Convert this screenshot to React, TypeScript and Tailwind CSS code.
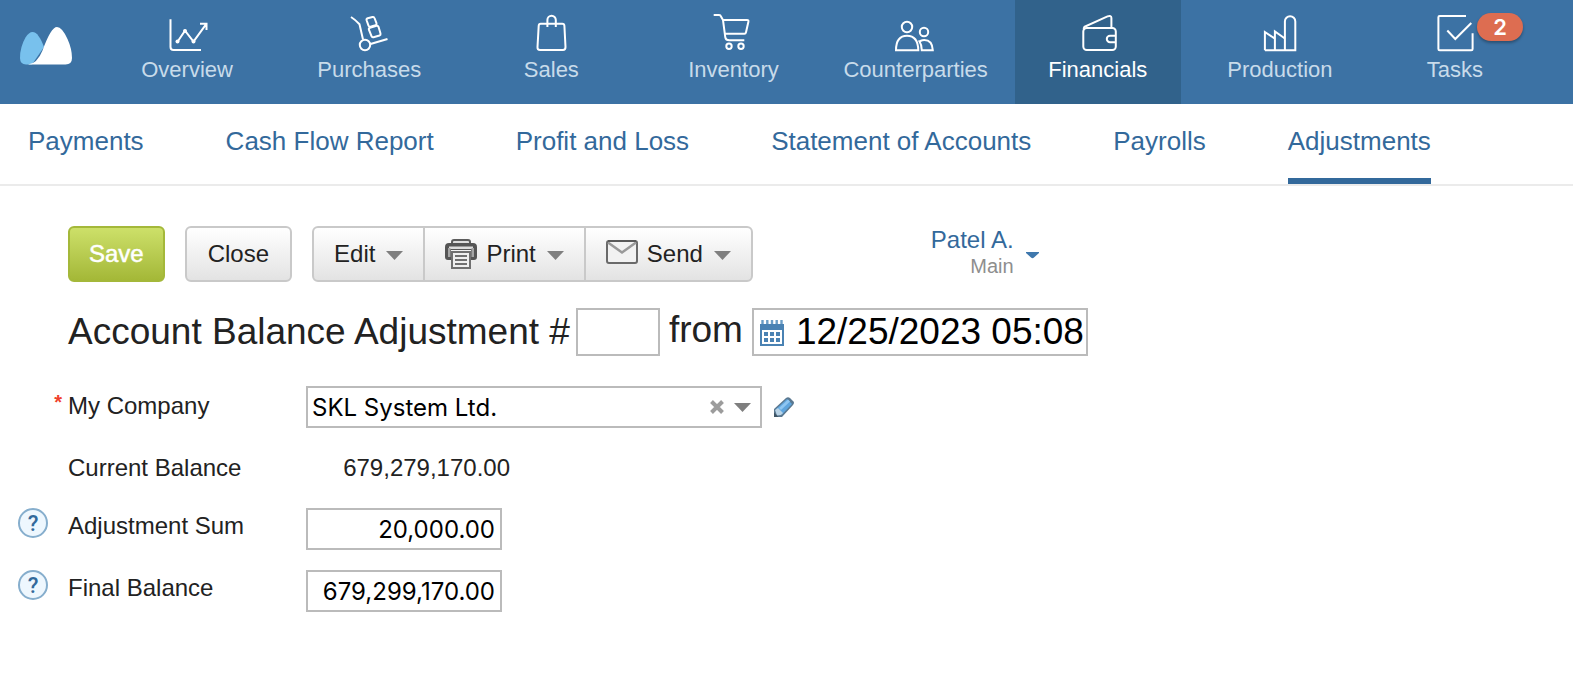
import React, { useState } from "react";

type NavItem = { label: string; icon: React.ReactNode; badge?: number };

const NAV: NavItem[] = [
  {
    label: "Overview",
    icon: (
      <>
        <path d="M3.5 6.3V34q0 3 3 3H34" />
        <path d="M10.5 28.7 18 17.7l8.5 10.8L39 11.3M33 10.8h6.5V17" />
        <g fill="currentColor" stroke="none">
          <circle cx="10.5" cy="28.5" r="2" />
          <circle cx="18" cy="18" r="2" />
          <circle cx="26.5" cy="28.5" r="2" />
        </g>
      </>
    ),
  },
  {
    label: "Purchases",
    icon: (
      <>
        <path d="M2 4q4 2.500 8.500 7.200L14 26.500" />
        <circle cx="16" cy="32" r="5.200" />
        <path d="M21.500 31 38.500 26" />
        <path d="M18.700 5.300 23.500 4q1.500-.4 2 1l2 5.200q.4 1.500-1 2l-5 1.500q-1.500.3-2-1l-1.900-5.400q-.4-1.500 1.100-2Z" />
        <path d="m21 14.700 6.500-1.900q1.500-.4 2 1l2 6.700q.4 1.500-1 2l-6 1.700q-1.500.4-2-1l-2.600-6.500q-.4-1.500 1.100-2Z" />
      </>
    ),
  },
  {
    label: "Sales",
    icon: (
      <>
        <path d="M9.700 10.700h21.600q2 0 2.100 2L34.500 34q0 3-2.500 3H9q-2.700 0-2.500-3l1.200-21.300q.1-2 2-2Z" />
        <path d="M16.400 14V7a4.200 4.200 0 0 1 8.400 0v7" />
      </>
    ),
  },
  {
    label: "Inventory",
    icon: (
      <>
        <path d="M.7 2H6q1.600 0 2 1.500L10 7l2.300 17.300q.5 3 4 3h15" />
        <path d="M10 7h24q1.800 0 1.400 1.800L33 19.200q-.3 1.500-1.500 1.500H12" />
        <circle cx="16" cy="33.300" r="2.700" />
        <circle cx="28" cy="33.300" r="2.700" />
      </>
    ),
  },
  {
    label: "Counterparties",
    icon: (
      <>
        <circle cx="11" cy="14" r="5.200" />
        <path d="M0 37.300q0-14.500 11-14.500t11.300 14.500Z" />
        <circle cx="28" cy="19" r="4.200" />
        <path d="M24.300 28q2-1 4-1 8 0 8.500 10.300H25.800q0-5.500-2.400-9Z" />
      </>
    ),
  },
  {
    label: "Financials",
    icon: (
      <>
        <rect x="5.300" y="15" width="32.500" height="22" rx="3.500" />
        <path d="M5.500 16 6.500 13.800 29.500 3.400Q33.400 2 33.400 5v10" />
        <path d="M37.800 22.800H32a3.200 3.200 0 0 0 0 6.400h5.800" />
      </>
    ),
  },
  {
    label: "Production",
    icon: (
      <>
        <path d="M4.900 37.200V19l10 6.600M14.900 37.200V18.500l10 7" />
        <path d="M4.900 37.200h30.400V8.400a5.200 5.200 0 0 0-10.400 0v28.800" />
      </>
    ),
  },
  {
    label: "Tasks",
    badge: 2,
    icon: (
      <>
        <path d="M31 2.900H4.700q-1.300 0-1.300 1.300v31.700q0 1.300 1.300 1.300h31.600q1.300 0 1.300-1.300V20.300" />
        <path d="m12.300 17.500 8 8.500L36.300 10" />
      </>
    ),
  },
];

const TABS = [
  "Payments",
  "Cash Flow Report",
  "Profit and Loss",
  "Statement of Accounts",
  "Payrolls",
  "Adjustments",
];

function Caret() {
  return (
    <svg width="17" height="9" viewBox="0 0 17 9" className="mt-[3px] shrink-0" aria-hidden="true">
      <path d="M0 0h17L8.500 9Z" fill="#7f7f7f" />
    </svg>
  );
}

function PrinterIcon() {
  return (
    <svg width="32" height="30" viewBox="0 0 32 30" aria-hidden="true">
      <path d="M7 5V3q0-2 2-2h14q2 0 2 2v2" fill="#ddd" stroke="#5c5c5c" strokeWidth="2" />
      <path d="M4 4h24q4 0 4 4v10q0 3-3 3h-3V11H6v10H3q-3 0-3-3V8q0-4 4-4Z" fill="#555" />
      <path d="M4 7.500h24v2.500H4Z" fill="#dcdcdc" />
      <path d="M3 9h2.500v9H3ZM26.500 9H29v9h-2.500Z" fill="#a5a5a5" />
      <path d="M7 13h18v16H7Z" fill="#efefef" stroke="#707070" strokeWidth="2" />
      <path d="M10 17h12M10 21h12M10 25h12" stroke="#707070" strokeWidth="2" />
    </svg>
  );
}

function EnvelopeIcon() {
  return (
    <svg width="32" height="24" viewBox="0 0 32 24" className="mb-1" aria-hidden="true">
      <rect x="1" y="1" width="30" height="22" rx="2" fill="#f2f2f2" stroke="#6a6a6a" strokeWidth="2" />
      <path d="M2 2.500 16 12.500 30 2.500" fill="none" stroke="#999" strokeWidth="2.500" />
      <path d="M2 1h28" stroke="#5a5a5a" strokeWidth="2" />
    </svg>
  );
}

function HelpButton({ about }: { about: string }) {
  return (
    <button
      type="button"
      aria-label={`Help: ${about}`}
      className="flex size-[30px] items-center justify-center rounded-full border-2 border-[#86aecd] bg-[#eef7fe] pt-0.5 font-[Roboto,sans-serif] text-[22px] leading-none font-medium text-[#33699b]"
    >
      ?
    </button>
  );
}

const groupButton =
  "flex h-full items-center px-5 text-[24px] leading-7 text-[#222]";
const field =
  "h-[42px] rounded-none border-2 border-[#bbb] bg-white font-[Inter,sans-serif] text-[24px] text-black outline-none";

export default function App() {
  const [company, setCompany] = useState("SKL System Ltd.");

  return (
    <div className="min-h-screen bg-white font-['Liberation_Sans',Arial,sans-serif] text-[#222]">
      <header className="flex h-[104px] bg-[#3c72a4]">
        <a href="#home" aria-label="Home" className="w-[104px] shrink-0 pt-[27px] pl-5">
          <svg width="52" height="38" viewBox="0 0 52 38" aria-hidden="true">
            <path d="M12.500 5c4.500 0 8 6 11.500 15L12 37.500H6Q0 37 0 31 0 20 5.500 10.500 9 5 12.500 5Z" fill="#78c1ed" />
            <path d="M8 37.500Q17 37 22.500 23.500 31 0 37 0q5 0 10.500 12Q52 22 52 31q0 6.500-6.500 6.500Z" fill="#fff" />
          </svg>
        </a>
        <nav aria-label="Main" className="mr-[42px] flex flex-1 gap-4">
          {NAV.map((item) => {
            const active = item.label === "Financials";
            return (
              <a
                key={item.label}
                href={`#${item.label.toLowerCase()}`}
                aria-current={active ? "page" : undefined}
                className={`flex flex-col items-center pt-[13px] text-[22px] leading-6 ${
                  active ? "bg-[#31628b] text-white" : "text-[#c8dbea]"
                } ${item.badge ? "w-[152px]" : "flex-1"}`}
              >
                <span className="relative text-white">
                  <svg
                    width="40"
                    height="40"
                    viewBox="0 0 40 40"
                    fill="none"
                    stroke="currentColor"
                    strokeWidth="2"
                    className="block overflow-visible"
                    aria-hidden="true"
                  >
                    {item.icon}
                  </svg>
                  {item.badge && (
                    <span className="absolute top-0 left-[42px] flex h-7 w-[46px] items-center justify-center rounded-full bg-[#dd6d51] font-[Inter,sans-serif] text-[22px] leading-7 font-semibold shadow-[0_2px_3px_rgba(0,0,0,0.3)]">
                      {item.badge}
                    </span>
                  )}
                </span>
                <span className="mt-[5px]">{item.label}</span>
              </a>
            );
          })}
        </nav>
      </header>

      <nav
        aria-label="Financials"
        className="flex h-[82px] gap-[82px] border-b-2 border-[#ebebeb] pl-7 text-[26px] leading-[30px] whitespace-nowrap text-[#33699b]"
      >
        {TABS.map((tab) => (
          <a
            key={tab}
            href={`#${tab.toLowerCase().replaceAll(" ", "-")}`}
            className={`h-20 pt-[22px] ${tab === "Adjustments" ? "border-b-6 border-[#33699b]" : ""}`}
          >
            {tab}
          </a>
        ))}
      </nav>

      <main className="pt-10">
        <div className="flex h-14 items-stretch gap-5 pl-[68px]">
          <button
            type="submit"
            form="adjustment"
            className="rounded-md border-2 border-[#a4b83a] bg-linear-to-b from-[#cde069] to-[#a4b837] px-[19px] text-[24px] leading-7 text-white [-webkit-text-stroke:0.500px_white]"
          >
            Save
          </button>
          <button
            type="button"
            className="rounded-md border-2 border-[#c9c9c9] bg-linear-to-b from-white to-[#e3e3e3] px-[21px] text-[24px] leading-7"
          >
            Close
          </button>
          <div className="flex divide-x-2 divide-[#c9c9c9] rounded-md border-2 border-[#c9c9c9] bg-linear-to-b from-white to-[#e3e3e3]">
            <button type="button" className={groupButton}>
              <span className="mr-[11px]">Edit</span>
              <Caret />
            </button>
            <button type="button" className={groupButton}>
              <PrinterIcon />
              <span className="mr-[11px] ml-[9px]">Print</span>
              <Caret />
            </button>
            <button type="button" className={groupButton}>
              <EnvelopeIcon />
              <span className="mr-[11px] ml-[9px]">Send</span>
              <Caret />
            </button>
          </div>
          <button type="button" className="ml-[158px] flex items-center gap-3">
            <span className="flex flex-col pb-1 text-right">
              <span className="text-[24px] leading-7 text-[#33699b]">Patel A.</span>
              <span className="text-[20px] leading-6 text-[#8e8e8e]">Main</span>
            </span>
            <svg width="13" height="7" viewBox="0 0 13 7" className="mt-0.5" aria-hidden="true">
              <path d="M0 0h13v1L8 5.500q-1.500 1.500-3 0L0 1Z" fill="#3f78ad" />
            </svg>
          </button>
        </div>

        <form id="adjustment" onSubmit={(e) => e.preventDefault()}>
          <div className="mt-[26px] flex h-12 items-center pl-[68px] text-[37px] leading-12 whitespace-nowrap">
            <label htmlFor="number">Account Balance Adjustment #</label>
            <input
              id="number"
              type="text"
              className="ml-[6px] h-12 w-[84px] border-2 border-[#bbb] px-1 outline-none"
            />
            <label htmlFor="date" className="mx-[9px] pb-1">
              from
            </label>
            <div className="flex h-12 w-[336px] items-center border-2 border-[#bbb] pl-[6px]">
              <svg width="24" height="26" viewBox="0 0 24 26" className="mt-0.5 shrink-0" aria-hidden="true">
                <path d="M0 4h24v22H0Z" fill="#4a82b3" />
                <path d="M2.500 0v4M7.300 0v4M12 0v4M16.700 0v4M21.500 0v4" stroke="#6b9dc6" strokeWidth="2.400" />
                <path d="M2 10h20v14H2Z" fill="#fff" />
                <path
                  d="M4 12h4v4H4ZM10 12h4v4h-4ZM16 12h4v4h-4ZM4 18h4v4H4ZM10 18h4v4h-4ZM16 18h4v4h-4Z"
                  fill="#4a82b3"
                />
              </svg>
              <input
                id="date"
                type="text"
                defaultValue="12/25/2023 05:08"
                className="h-11 w-full min-w-0 pl-3 text-black outline-none"
              />
            </div>
          </div>

          <div className="mt-[30px] grid grid-cols-[50px_238px_1fr] pl-[18px] text-[24px] leading-7">
            <span
              className="h-[62px] pt-[6px] pr-[6px] text-right text-[20px] leading-5 font-bold text-[#f0402c]"
              aria-hidden="true"
            >
              *
            </span>
            <label htmlFor="company" className="pt-[6px]">
              My Company
            </label>
            <div className="flex items-start">
              <div className="relative w-[456px]">
                <select
                  id="company"
                  value={company}
                  onChange={(e) => setCompany(e.target.value)}
                  className={`${field} w-full appearance-none pt-0.5 pr-16 pl-1`}
                >
                  <option value=""></option>
                  <option>SKL System Ltd.</option>
                </select>
                <button
                  type="button"
                  aria-label="Clear company"
                  onClick={() => setCompany("")}
                  className="absolute top-[14px] right-[38px]"
                >
                  <svg width="14" height="14" viewBox="0 0 14 14" className="block" aria-hidden="true">
                    <path d="m1.500 1.500 11 11M12.500 1.500l-11 11" stroke="#9c9c9c" strokeWidth="4" />
                  </svg>
                </button>
                <span className="pointer-events-none absolute top-[14px] right-[11px]">
                  <Caret />
                </span>
              </div>
              <button type="button" aria-label="Edit company" className="mt-[11px] ml-3">
                <svg width="20" height="20" viewBox="0 0 20 20" className="block" aria-hidden="true">
                  <path d="M0 12 12 1q2-1.500 4 0l3 3q2 1.500 0 4L8 20H0Z" fill="#5a7890" />
                  <path d="M2 12 13 2l5 5L8 17.500Z" fill="#5fa5de" />
                  <path d="M5 11 14 2.500l2 2L7 13Z" fill="#8fc6f2" />
                  <path d="M1 13l3-2 5 5-2 2-4 .5Z" fill="#b9d3e6" />
                  <path d="M0 15.500 4.500 20H0Z" fill="#3f5565" />
                </svg>
              </button>
            </div>

            <span className="h-[60px]" />
            <span className="pt-[6px]">Current Balance</span>
            <span className="w-[204px] pt-[6px] text-right">679,279,170.00</span>

            <div className="h-[62px]">
              <HelpButton about="Adjustment Sum" />
            </div>
            <label htmlFor="sum" className="pt-1">
              Adjustment Sum
            </label>
            <input
              id="sum"
              type="text"
              defaultValue="20,000.00"
              className={`${field} w-[196px] px-[5px] text-right`}
            />

            <div className="h-[62px]">
              <HelpButton about="Final Balance" />
            </div>
            <label htmlFor="final" className="pt-1">
              Final Balance
            </label>
            <input
              id="final"
              type="text"
              defaultValue="679,299,170.00"
              className={`${field} w-[196px] px-[5px] text-right`}
            />
          </div>
        </form>
      </main>
    </div>
  );
}
